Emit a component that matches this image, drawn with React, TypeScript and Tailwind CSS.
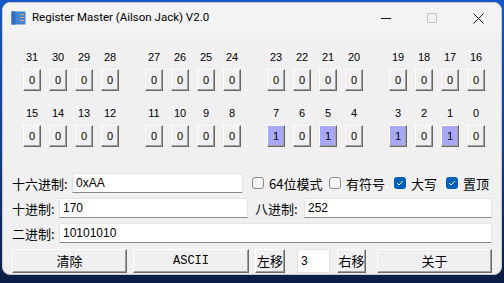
import React from "react";

const VALUE = 0xaa;

const ROWS = [
  [31, 30, 29, 28, 27, 26, 25, 24, 23, 22, 21, 20, 19, 18, 17, 16],
  [15, 14, 13, 12, 11, 10, 9, 8, 7, 6, 5, 4, 3, 2, 1, 0],
];

const cjk = "font-['Microsoft_YaHei','Noto_Sans_CJK_SC',sans-serif]";
const bitFont = "font-['Liberation_Sans',sans-serif] text-[11px]";

function BitCell({ bit }: { bit: number }) {
  const on = ((VALUE >> bit) & 1) === 1;
  return (
    <div className="flex w-[18px] flex-col items-center">
      <div className={`h-[14px] leading-[14px] text-black ${bitFont}`}>{bit}</div>
      <button
        className={`mt-[5px] flex h-[22px] w-[18px] items-center justify-center border border-t-white border-l-white border-r-[#696969] border-b-[#696969] shadow-[inset_-1px_-1px_0_#a0a0a0] text-black ${bitFont} ${
          on ? "bg-[#a8a8f8]" : "bg-[#f0f0f0]"
        }`}
      >
        {on ? "1" : "0"}
      </button>
    </div>
  );
}

function Checkbox({ label, checked, width }: { label: string; checked: boolean; width: string }) {
  return (
    <div className={`flex items-center gap-[5px] ${width}`}>
      {checked ? (
        <span className="flex h-[12px] w-[12px] items-center justify-center rounded-[3px] bg-[#005fb8]">
          <svg width="8" height="8" viewBox="0 0 8 8">
            <path d="M1.2 4.2 L3.1 6 L6.8 2" fill="none" stroke="white" strokeWidth="1" />
          </svg>
        </span>
      ) : (
        <span className="h-[12px] w-[12px] rounded-[3px] border border-[#8a8a8a] bg-[#f7f7f7]" />
      )}
      <span className={`text-[13px] leading-none text-black ${cjk}`}>{label}</span>
    </div>
  );
}

function Field({ value, className }: { value: string; className: string }) {
  return (
    <div
      className={`flex h-[20px] items-center border border-[#e3e3e3] border-b-[#8a8a8a] bg-white pl-[3px] font-['Liberation_Sans',sans-serif] text-[12px] text-black ${className}`}
    >
      {value}
    </div>
  );
}

function ClassicButton({ label, className }: { label: string; className: string }) {
  return (
    <button
      className={`flex h-[24px] items-center justify-center border border-t-white border-l-white border-r-[#696969] border-b-[#696969] bg-[#f0f0f0] shadow-[inset_-1px_-1px_0_#a0a0a0] text-[13px] text-black ${cjk} ${className}`}
    >
      {label}
    </button>
  );
}

function Label({ text, className }: { text: string; className: string }) {
  return <div className={`text-[13px] leading-none text-black ${cjk} ${className}`}>{text}</div>;
}

export default function App() {
  const groups = (row: number[]) => [0, 1, 2, 3].map((g) => row.slice(g * 4, g * 4 + 4));

  return (
    <div className="h-[283px] w-[504px] overflow-hidden bg-gradient-to-b from-[#1758c4] via-[#123f8f] to-[#0b1d45] pl-[2px] pt-[2px]">
      <div className="flex h-[273px] w-[500px] flex-col overflow-hidden rounded-[8px] border border-[#c8c8c8] bg-[#f0f0f0]">
        {/* title bar */}
        <div className="flex h-[30px] shrink-0 items-center bg-[#f3f3f3] pl-[8px]">
          <svg width="15" height="14" viewBox="0 0 15 14">
            <rect x="0.5" y="0.5" width="14" height="13" fill="#3f86d6" />
            <rect x="0.5" y="0.5" width="4" height="13" fill="#2f6fc0" />
            <rect x="9" y="3" width="4" height="1" fill="#f0a060" />
            <rect x="9" y="6" width="4" height="1" fill="#f0a060" />
            <rect x="9" y="9" width="4" height="1" fill="#f0a060" />
          </svg>
          <span className="ml-[6px] font-['Roboto',sans-serif] text-[11.5px] text-black">
            Register Master (Ailson Jack) V2.0
          </span>
          <div className="ml-auto flex h-full items-center">
            <div className="flex w-[46px] items-center justify-center">
              <div className="h-px w-[10px] bg-[#1a1a1a]" />
            </div>
            <div className="flex w-[46px] items-center justify-center">
              <div className="h-[10px] w-[10px] rounded-[1px] border border-[#c4c4c4]" />
            </div>
            <div className="flex w-[46px] items-center justify-center">
              <svg width="11" height="11" viewBox="0 0 11 11">
                <path d="M0.5 0.5 L10.5 10.5 M10.5 0.5 L0.5 10.5" stroke="#1a1a1a" strokeWidth="1" />
              </svg>
            </div>
          </div>
        </div>

        {/* client */}
        <div className="flex flex-1 flex-col pl-[9px] pr-[9px]">
          <div className="flex flex-col gap-[15px] pl-[11px] pt-[17px]">
            {ROWS.map((row, r) => (
              <div key={r} className="flex gap-[26px]">
                {groups(row).map((grp, g) => (
                  <div key={g} className="flex gap-[8px]">
                    {grp.map((b) => (
                      <BitCell key={b} bit={b} />
                    ))}
                  </div>
                ))}
              </div>
            ))}
          </div>

          <div className="mt-[26px] flex h-[20px] items-center">
            <Label text="十六进制:" className="w-[60px]" />
            <Field value="0xAA" className="w-[171px]" />
            <div className="ml-[9px] flex items-center">
              <Checkbox label="64位模式" checked={false} width="w-[77px]" />
              <Checkbox label="有符号" checked={false} width="w-[65px]" />
              <Checkbox label="大写" checked width="w-[52px]" />
              <Checkbox label="置顶" checked width="w-[44px]" />
            </div>
          </div>

          <div className="mt-[5px] flex h-[20px] items-center">
            <Label text="十进制:" className="w-[47px]" />
            <Field value="170" className="w-[189px]" />
            <Label text="八进制:" className="ml-[7px] w-[49px]" />
            <Field value="252" className="flex-1" />
          </div>

          <div className="mt-[5px] flex h-[20px] items-center">
            <Label text="二进制:" className="w-[47px]" />
            <Field value="10101010" className="flex-1" />
          </div>

          <div className="mt-[6px] flex items-center">
            <ClassicButton label="清除" className="w-[115px]" />
            <ClassicButton
              label="ASCII"
              className="ml-[6px] w-[116px] !font-['Liberation_Mono',monospace] !text-[12px]"
            />
            <ClassicButton label="左移" className="ml-[6px] w-[30px]" />
            <Field value="3" className="ml-[12px] h-[24px] w-[33px] border-b-[#e3e3e3]" />
            <ClassicButton label="右移" className="ml-[7px] w-[29px]" />
            <ClassicButton label="关于" className="ml-[11px] w-[115px]" />
          </div>
        </div>
      </div>
    </div>
  );
}
